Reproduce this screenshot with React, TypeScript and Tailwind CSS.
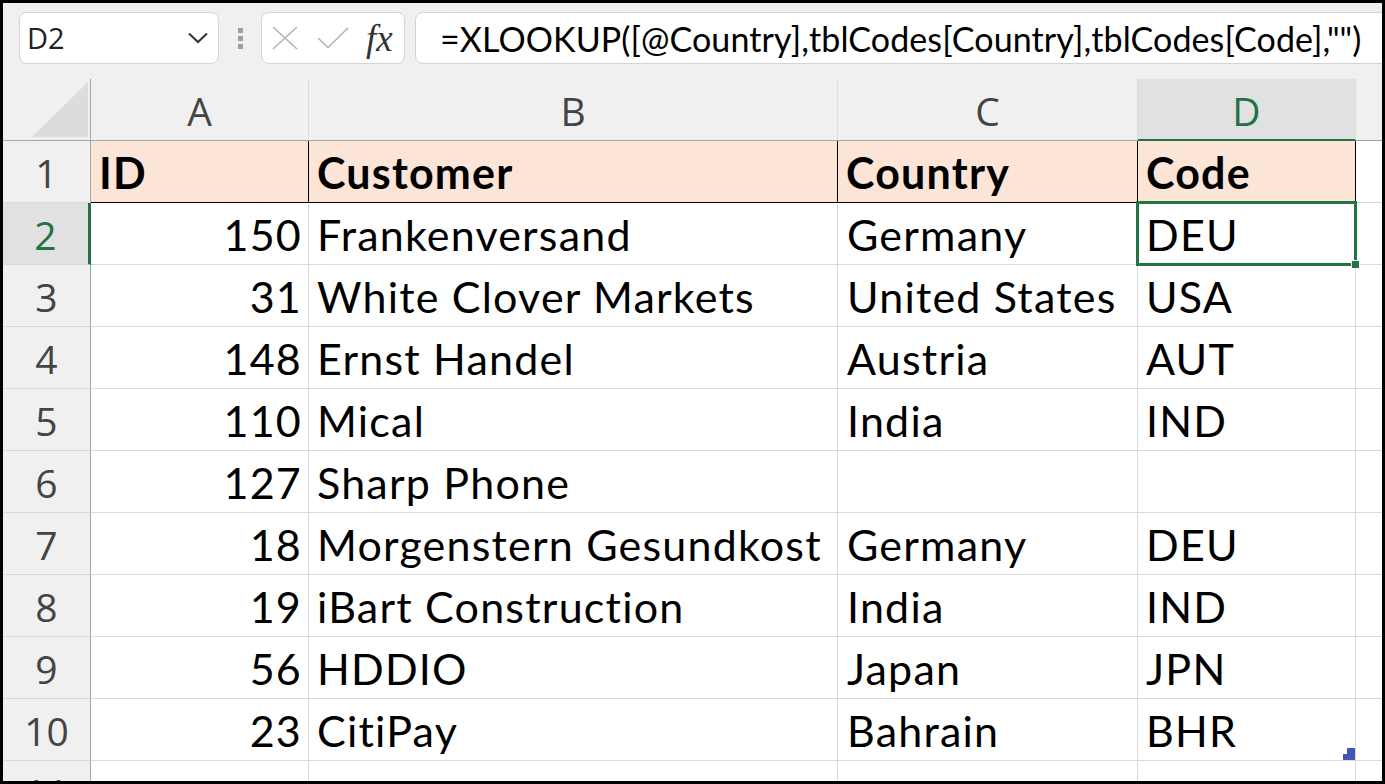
import React from "react";

type RowData = [number, string, string, string];

const rows: RowData[] = [
  [150, "Frankenversand", "Germany", "DEU"],
  [31, "White Clover Markets", "United States", "USA"],
  [148, "Ernst Handel", "Austria", "AUT"],
  [110, "Mical", "India", "IND"],
  [127, "Sharp Phone", "", ""],
  [18, "Morgenstern Gesundkost", "Germany", "DEU"],
  [19, "iBart Construction", "India", "IND"],
  [56, "HDDIO", "Japan", "JPN"],
  [23, "CitiPay", "Bahrain", "BHR"],
];

const cellFont = "font-['Lato',sans-serif] text-[43px] tracking-[1.2px] text-black";
const headFont = "font-['Open_Sans',sans-serif] text-[39px] text-[#444]";

const RowHead = ({ n, active }: { n: number; active?: boolean }) => (
  <div
    className={`w-[88px] shrink-0 h-full flex items-center justify-center pt-[4px] border-b border-[#d9d9d9] ${headFont} ${
      active
        ? "bg-[#e1e1e1] border-r-[3px] border-r-[#217346] text-[#217346]"
        : "bg-[#f0f0f0] border-r border-r-[#a6a6a6]"
    }`}
  >
    {n}
  </div>
);

const App: React.FC = () => {
  return (
    <div className="w-[1385px] h-[784px] border-[3px] border-black bg-[#f0f0f0] overflow-hidden flex flex-col">
      {/* FORMULA BAR */}
      <div className="h-[76px] shrink-0 flex items-start pt-[9px] pl-[16px]">
        <div className="w-[200px] h-[52px] shrink-0 rounded-[8px] border border-[#d4d4d4] bg-white flex items-center justify-between pl-[7px] pr-[10px]">
          <span className="font-['Open_Sans',sans-serif] text-[29px] text-[#222]">D2</span>
          <svg width="20" height="12" viewBox="0 0 20 12">
            <path d="M1 1.5 L10 10 L19 1.5" fill="none" stroke="#333" strokeWidth="2" />
          </svg>
        </div>

        <div className="w-[42px] h-[52px] shrink-0 flex flex-col items-center justify-center gap-[3px]">
          <span className="w-[5px] h-[5px] bg-[#9e9e9e]" />
          <span className="w-[5px] h-[5px] bg-[#9e9e9e]" />
          <span className="w-[5px] h-[5px] bg-[#9e9e9e]" />
        </div>

        <div className="w-[144px] h-[52px] shrink-0 rounded-[8px] border border-[#d4d4d4] bg-white flex items-center pl-[10px]">
          <svg width="26" height="24" viewBox="0 0 26 24">
            <path d="M1 1 L25 23 M25 1 L1 23" stroke="#b3b3b3" strokeWidth="1.6" fill="none" />
          </svg>
          <svg width="32" height="22" viewBox="0 0 32 22" className="ml-[19px]">
            <path d="M1 11 L11 20.5 L31 1" stroke="#b3b3b3" strokeWidth="1.6" fill="none" />
          </svg>
          <span className="ml-[17px] font-['Liberation_Serif',serif] italic text-[37px] leading-none text-[#333]">
            fx
          </span>
        </div>

        <div className="flex-1 -mr-[20px] ml-[10px] h-[52px] rounded-[8px] border border-[#d4d4d4] bg-white flex items-center pl-[24px] font-['Lato',sans-serif] text-[34px] tracking-[0.1px] text-black whitespace-nowrap">
          {'=XLOOKUP([@Country],tblCodes[Country],tblCodes[Code],"")'}
        </div>
      </div>

      {/* COLUMN HEADERS */}
      <div className="h-[62px] shrink-0 flex">
        <div className="w-[88px] shrink-0 h-full border-r border-[#a6a6a6] border-b border-b-[#a6a6a6] flex items-end justify-end pr-[2px] pb-[3px]">
          <svg width="56" height="55" viewBox="0 0 56 55">
            <polygon points="0,55 56,0 56,55" fill="#dcdcdc" />
          </svg>
        </div>
        {[
          ["A", "w-[218px]"],
          ["B", "w-[529px]"],
          ["C", "w-[300px]"],
        ].map(([l, w]) => (
          <div
            key={l}
            className={`${w} shrink-0 h-full flex items-center justify-center pt-[4px] border-r border-[#dcdcdc] border-b border-b-[#a6a6a6] ${headFont}`}
          >
            {l}
          </div>
        ))}
        <div
          className={`w-[218px] shrink-0 h-full flex items-center justify-center pt-[4px] bg-[#e1e1e1] border-r border-[#dcdcdc] border-b-2 border-b-[#217346] ${headFont} text-[#217346]`}
        >
          D
        </div>
        <div className="flex-1 h-full border-b border-[#a6a6a6]" />
      </div>

      {/* GRID */}
      <div className="flex-1 bg-white">
        {/* row 1: table header */}
        <div className="h-[62px] flex">
          <RowHead n={1} />
          {[
            ["ID", "w-[218px]"],
            ["Customer", "w-[529px]"],
            ["Country", "w-[300px]"],
            ["Code", "w-[218px]"],
          ].map(([t, w]) => (
            <div
              key={t}
              className={`${w} shrink-0 h-full flex items-center pl-[8px] pt-[4px] bg-[#fce4d6] border-r border-b border-black ${cellFont} font-bold`}
            >
              {t}
            </div>
          ))}
          <div className="flex-1 h-full border-b border-[#d9d9d9]" />
        </div>

        {rows.map((r, i) => {
          const n = i + 2;
          return (
            <div key={n} className="h-[62px] flex">
              <RowHead n={n} active={n === 2} />
              <div
                className={`w-[218px] shrink-0 h-full flex items-center justify-end pr-[6px] pt-[4px] border-r border-b border-[#d9d9d9] ${cellFont}`}
              >
                {r[0]}
              </div>
              <div
                className={`w-[529px] shrink-0 h-full flex items-center pl-[8px] pt-[4px] border-r border-b border-[#d9d9d9] whitespace-nowrap ${cellFont}`}
              >
                {r[1]}
              </div>
              <div
                className={`w-[300px] shrink-0 h-full flex items-center pl-[9px] pt-[4px] border-r border-b border-[#d9d9d9] whitespace-nowrap ${cellFont}`}
              >
                {r[2]}
              </div>
              <div
                className={`relative w-[218px] shrink-0 h-full flex items-center pl-[8px] pt-[4px] border-r border-b border-[#d9d9d9] ${cellFont} ${
                  n === 2 ? "z-10" : ""
                }`}
              >
                {r[3]}
                {n === 2 && (
                  <>
                    <div className="absolute -left-[2px] -top-[2px] -right-[2px] -bottom-[2px] border-[3px] border-[#217346]" />
                    <div className="absolute -right-[5px] -bottom-[5px] w-[9px] h-[9px] bg-[#217346] border border-white" />
                  </>
                )}
                {n === 10 && (
                  <svg
                    width="12"
                    height="12"
                    viewBox="0 0 12 12"
                    className="absolute right-0 bottom-0"
                  >
                    <polygon points="4,0 12,0 12,12 0,12 0,6 4,6" fill="#4455b5" />
                  </svg>
                )}
              </div>
              <div className="flex-1 h-full border-b border-[#d9d9d9]" />
            </div>
          );
        })}

        <div className="h-[62px] flex">
          <RowHead n={11} />
          <div className="w-[218px] shrink-0 h-full border-r border-[#d9d9d9]" />
          <div className="w-[529px] shrink-0 h-full border-r border-[#d9d9d9]" />
          <div className="w-[300px] shrink-0 h-full border-r border-[#d9d9d9]" />
          <div className="w-[218px] shrink-0 h-full border-r border-[#d9d9d9]" />
          <div className="flex-1 h-full" />
        </div>
      </div>
    </div>
  );
};

export default App;
